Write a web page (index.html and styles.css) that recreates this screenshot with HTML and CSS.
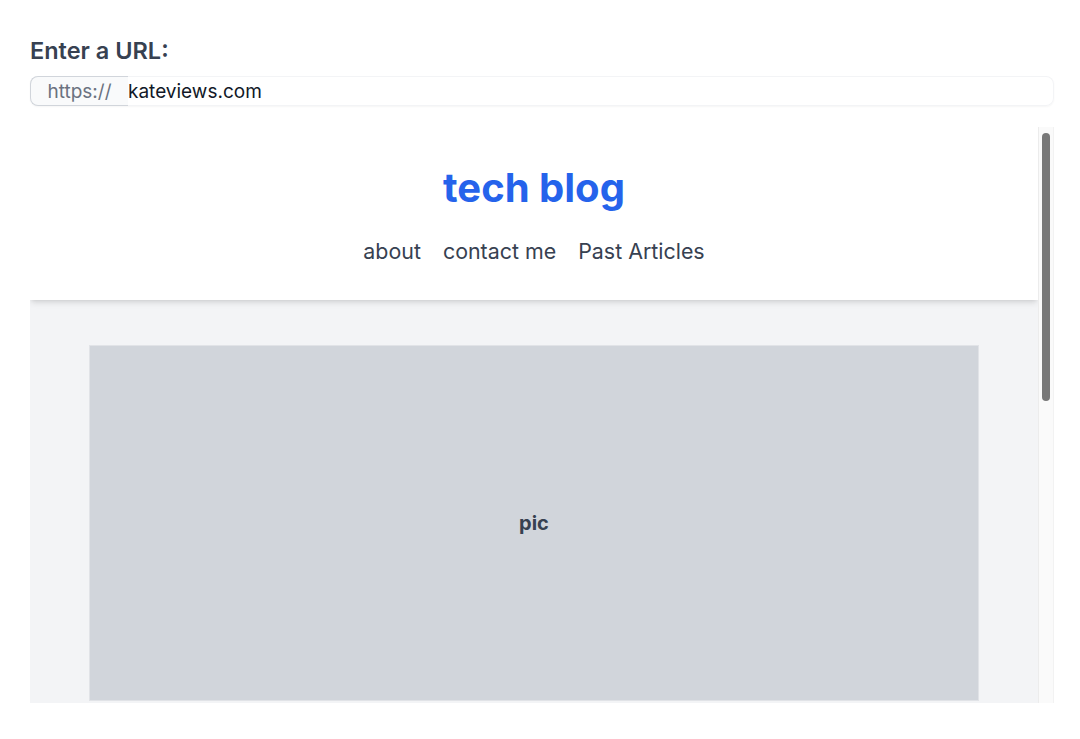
FILE: index.html
```html
<!DOCTYPE html>
<html lang="en">
<head>
<meta charset="utf-8">
<title>URL preview</title>
<link rel="stylesheet" href="styles.css">
</head>
<body>
<div class="page">
  <label class="label" for="url">Enter a URL:</label>
  <div class="url-row">
    <span class="prefix">https://</span>
    <input id="url" class="url-input" type="text" value="kateviews.com">
  </div>
  <div class="frame">
    <div class="viewport">
      <header class="site-header">
        <h1 class="site-title">tech blog</h1>
        <nav class="site-nav">
          <a href="#">about</a>
          <a href="#">contact me</a>
          <a href="#">Past Articles</a>
        </nav>
      </header>
      <main class="site-main">
        <div class="pic">pic</div>
        <div class="article">
          <div class="article-line"></div>
          <div class="article-line"></div>
          <div class="article-line short"></div>
        </div>
      </main>
    </div>
    <div class="scrollbar" aria-hidden="true">
      <div class="thumb"></div>
    </div>
  </div>
</div>
</body>
</html>
```

FILE: styles.css
```css
* { box-sizing: border-box; }
html, body { margin: 0; padding: 0; background: #ffffff; }
body { font-family: Inter, "Noto Sans", sans-serif; color: #374151; }

.page {
  padding: 37px 26px 0 30px;
  display: flex;
  flex-direction: column;
}

.label {
  font-size: 23.5px;
  line-height: 28px;
  font-weight: 600;
  color: #374151;
}

.url-row {
  margin-top: 11px;
  display: flex;
  height: 30px;
  border-radius: 8px;
  box-shadow: 0 1px 2px rgba(0,0,0,0.04);
  border: 1px solid #f3f4f6;
  border-left: none;
}

.prefix {
  width: 98px;
  display: flex;
  align-items: center;
  justify-content: center;
  font-size: 19px;
  color: #6b7280;
  background: #f9fafb;
  border: 1px solid #d1d5db;
  border-right: none;
  border-radius: 8px 0 0 8px;
  margin: -1px 0;
}

.url-input {
  flex: 1;
  border: none;
  outline: none;
  background: transparent;
  font-family: inherit;
  font-size: 19px;
  color: #111827;
  padding: 0;
  border-radius: 0 8px 8px 0;
}

.frame {
  margin-top: 21px;
  height: 576px;
  width: 1024px;
  display: flex;
  background: #f3f4f6;
}

.viewport {
  flex: 1;
  overflow: hidden;
}

.scrollbar {
  width: 16px;
  flex: none;
  background: #fafafa;
  border-left: 1px solid #ececec;
  border-right: 1px solid #f2f2f2;
  padding: 6px 3px 0 3px;
}

.thumb {
  height: 268px;
  width: 8px;
  border-radius: 4px;
  background: #787878;
}

.site-header {
  background: #ffffff;
  box-shadow: 0 4px 6px -1px rgba(0,0,0,0.1), 0 2px 4px -2px rgba(0,0,0,0.1);
  padding: 41px 0 35px;
  display: flex;
  flex-direction: column;
  align-items: center;
  position: relative;
}

.site-title {
  margin: 0;
  font-size: 40px;
  line-height: 40px;
  font-weight: 700;
  color: #2563eb;
}

.site-nav {
  margin-top: 29px;
  display: flex;
  gap: 22px;
  font-size: 21.4px;
  line-height: 28px;
}
.site-nav a { color: #374151; text-decoration: none; }

.site-main {
  padding: 45px 59px 60px;
  display: flex;
  flex-direction: column;
  gap: 40px;
}

.pic {
  height: 356px;
  background: #d1d5db;
  border: 1px solid #e1e3e7;
  display: flex;
  align-items: center;
  justify-content: center;
  font-size: 20px;
  font-weight: 700;
  color: #374151;
}

.article {
  display: flex;
  flex-direction: column;
  gap: 16px;
  height: 540px;
}
.article-line { height: 20px; background: #e5e7eb; }
.article-line.short { width: 60%; }
```
